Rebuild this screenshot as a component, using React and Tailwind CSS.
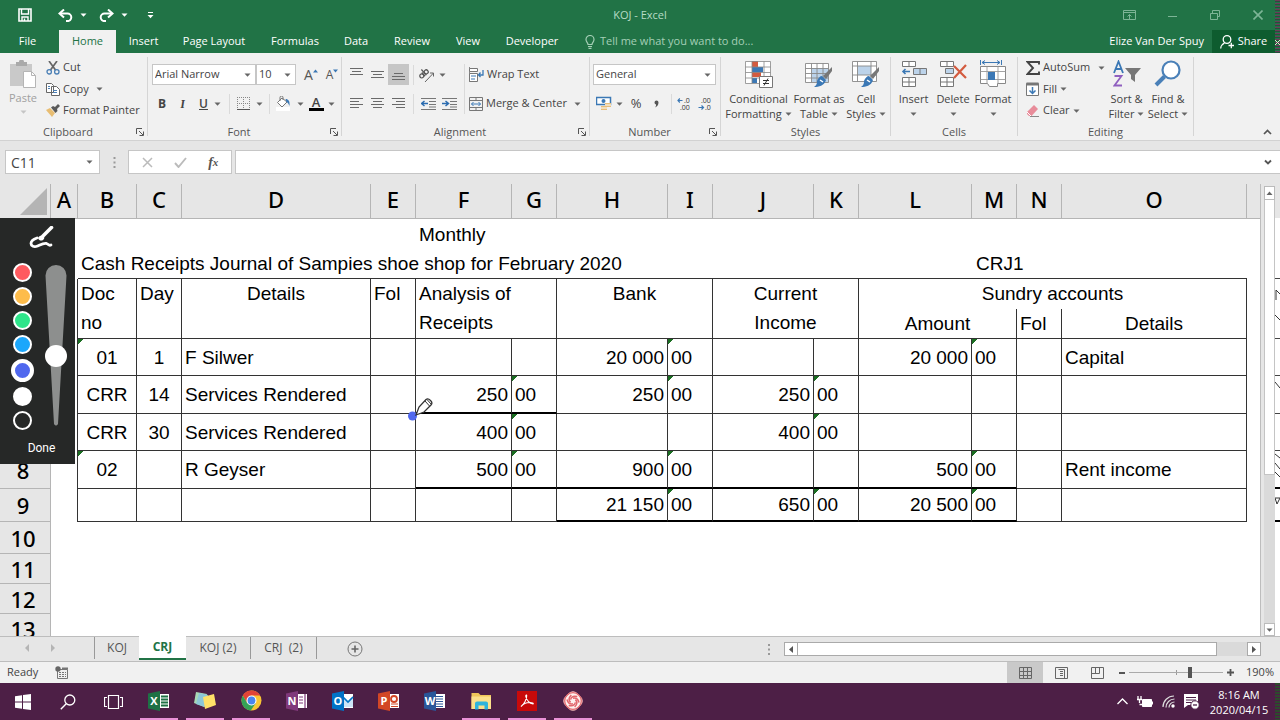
import React from "react";
import clsx from "clsx";

/* ---------- shared bits ---------- */

function Svg({ w, h, children, className }) {
  return (
    <svg width={w} height={h} viewBox={`0 0 ${w} ${h}`} fill="none" aria-hidden="true" className={clsx("shrink-0", className)}>
      {children}
    </svg>
  );
}

function Caret({ className = "text-[#666]" }) {
  return (
    <Svg w={7} h={4} className={className}>
      <path d="M0.5 0.5h6L3.5 3.8z" fill="currentColor" />
    </Svg>
  );
}

function IconButton({ label, className, children }) {
  return (
    <button type="button" aria-label={label} className={clsx("flex items-center justify-center", className)}>
      {children}
    </button>
  );
}

/* ---------- title bar ---------- */

function TitleBar() {
  return (
    <header className="grid h-[30px] shrink-0 grid-cols-3 items-center bg-[#217346] text-white">
      <div className="flex items-center pl-3">
        <IconButton label="Save" className="w-[26px]">
          <Svg w={14} h={14}>
            <path d="M1 1h12v12H1z" stroke="currentColor" strokeWidth="1.6" />
            <path d="M3.5 1v5h7V1M4 13V9h6v4M6.5 10.5V13" stroke="currentColor" strokeWidth="1.4" />
          </Svg>
        </IconButton>
        <IconButton label="Undo" className="ml-3 w-[30px]">
          <Svg w={15} h={13}>
            <path d="M2 4.5h7.5a3.8 3.8 0 0 1 0 7.6H8" stroke="currentColor" strokeWidth="2" />
            <path d="M6 0.5L1.5 4.5L6 8.5" stroke="currentColor" strokeWidth="2" />
          </Svg>
        </IconButton>
        <Caret className="text-white" />
        <IconButton label="Redo" className="ml-1 w-[30px]">
          <Svg w={15} h={13}>
            <path d="M13 4.5H5.5a3.8 3.8 0 0 0 0 7.6H7" stroke="currentColor" strokeWidth="2" />
            <path d="M9 0.5l4.5 4L9 8.5" stroke="currentColor" strokeWidth="2" />
          </Svg>
        </IconButton>
        <Caret className="text-white" />
        <IconButton label="Customize Quick Access Toolbar" className="ml-3 w-5">
          <Svg w={7} h={7}>
            <path d="M1 0.5h5" stroke="currentColor" />
            <path d="M0.5 3h6L3.5 6.3z" fill="currentColor" />
          </Svg>
        </IconButton>
      </div>
      <h1 className="text-center text-[11px] leading-4 text-[#b5dcc5]">KOJ - Excel</h1>
      <div className="flex justify-end text-[#7db596]">
        <IconButton label="Ribbon Display Options" className="w-[43px]">
          <Svg w={13} h={10}>
            <path d="M0.5 0.5h12v9h-12zM0.5 2.5h12M6.5 9V4.5M4.5 6.5l2-2l2 2" stroke="currentColor" />
          </Svg>
        </IconButton>
        <IconButton label="Minimize" className="w-[43px]">
          <Svg w={9} h={9}><path d="M0 5.5h9" stroke="currentColor" /></Svg>
        </IconButton>
        <IconButton label="Restore" className="w-[43px]">
          <Svg w={10} h={10}>
            <path d="M0.5 3.5h7v6h-7zM2.5 3.5v-3h7v6h-2" stroke="currentColor" />
          </Svg>
        </IconButton>
        <IconButton label="Close" className="w-[43px]">
          <Svg w={10} h={10}><path d="M0.5 0.5l9 9M9.5 0.5l-9 9" stroke="currentColor" strokeWidth="1.6" /></Svg>
        </IconButton>
      </div>
    </header>
  );
}

const TABS = [
  ["File", "w-[55px]"],
  ["Home", "ml-1 w-[57px] bg-[#f1f1f1] text-[#217346]"],
  ["Insert", "w-[55px]"],
  ["Page Layout", "w-[86px]"],
  ["Formulas", "w-[76px]"],
  ["Data", "w-[46px]"],
  ["Review", "w-[66px]"],
  ["View", "w-[46px]"],
  ["Developer", "w-[82px]"],
];

function RibbonTabs() {
  return (
    <nav className="flex h-[23px] shrink-0 bg-[#217346] text-[11px] text-white">
      {TABS.map(([name, cls]) => (
        <button key={name} type="button" className={clsx("whitespace-nowrap text-center", cls)}>
          {name}
        </button>
      ))}
      <button type="button" className="ml-3 flex items-center gap-[5px] text-[#a5cfb6]">
        <Svg w={10} h={14}>
          <path d="M3 9.5C3 7.5 1 7 1 4.5a4 4 0 0 1 8 0C9 7 7 7.5 7 9.5zM3 11.5h4M3.5 13.3h3" stroke="currentColor" strokeWidth="1.2" />
        </Svg>
        Tell me what you want to do...
      </button>
      <div className="ml-auto flex pr-[5px]">
        <button type="button" className="px-2">Elize Van Der Spuy</button>
        <button type="button" className="flex w-[63px] items-center justify-center gap-1 bg-[#0e5c2f] font-medium">
          <Svg w={14} h={14}>
            <circle cx="7" cy="4.5" r="3.8" stroke="currentColor" strokeWidth="1.3" />
            <path d="M0.7 13.5C1 10.5 2.5 9 4.5 8M8.5 10.5h5.5M11.3 7.8v5.5" stroke="currentColor" strokeWidth="1.3" />
          </Svg>
          Share
        </button>
      </div>
    </nav>
  );
}

/* ---------- ribbon ---------- */

function Group({ name, width, launcher, children }) {
  return (
    <section aria-label={name} className={clsx("flex shrink-0 pt-1", width)}>
      <div className="flex min-w-0 flex-1 flex-col">
        <div className="flex h-[67px]">{children}</div>
        <div className="flex h-4 items-center text-[#555]">
          <span className="flex-1 text-center text-[11px] leading-4">{name}</span>
          {launcher && (
            <IconButton label={`${name} settings`} className="mr-[3px] w-2">
              <Svg w={8} h={8}>
                <path d="M0.5 6V0.5H6M3 3l4 4M7.5 3.5v4h-4" stroke="currentColor" />
              </Svg>
            </IconButton>
          )}
        </div>
      </div>
      <div className="mb-1 w-px bg-[#d5d5d5]" />
    </section>
  );
}

const Divider = () => <div className="h-5 w-px shrink-0 bg-[#dadada]" />;

function Combo({ label, value, width }) {
  return (
    <div className={clsx("flex h-[21px] items-center border border-[#c6c6c6] bg-white pr-1", width)}>
      <select aria-label={label} className="h-full min-w-0 flex-1 appearance-none bg-transparent pl-[2px] text-[11px] text-[#444] outline-none">
        <option>{value}</option>
      </select>
      <Caret />
    </div>
  );
}

function Lines({ rows }) {
  return (
    <Svg w={14} h={14}>
      {rows.map(([x, y, len]) => (
        <path key={y} d={`M${x} ${y}.5h${len}`} stroke="#6a6a6a" />
      ))}
    </Svg>
  );
}

const TOP = [[0, 0, 13], [2, 3, 9], [0, 6, 13]];
const MIDDLE = [[0, 3, 13], [2, 6, 9], [0, 9, 13]];
const BOTTOM = [[2, 5, 9], [0, 8, 13], [0, 11, 13]];
const LEFT = [[0, 1, 13], [0, 4, 9], [0, 7, 13], [0, 10, 9]];
const CENTER = [[0, 1, 13], [2, 4, 9], [0, 7, 13], [2, 10, 9]];
const RIGHT = [[0, 1, 13], [4, 4, 9], [0, 7, 13], [4, 10, 9]];

function Indent({ flip }) {
  return (
    <Svg w={16} h={14}>
      <path d="M0 1.5h15M8 4.5h7M8 7.5h7M0 12.5h15M8 10h7" stroke="#777" />
      <path d={flip ? "M0 6.5h6M3.5 4l3 2.5l-3 2.5" : "M7 6.5H1M3.5 4L0.5 6.5l3 2.5"} stroke="#2b6cb0" strokeWidth="1.5" />
    </Svg>
  );
}

function Clipboard() {
  return (
    <Group name="Clipboard" width="w-[148px]" launcher>
      <button type="button" className="flex w-[46px] flex-col items-center pt-[3px] text-[#a0a0a0]">
        <Svg w={28} h={30}>
          <path d="M1 4h22v22H1z" fill="#c9c9c9" />
          <path d="M7 2h3a2.5 2.5 0 0 1 5 0h3v4H7z" fill="#aaa" />
          <path d="M14.5 11.5h8l4 4v12h-12z" fill="#fff" stroke="#b5b5b5" />
          <path d="M22.5 11.5v4h4" stroke="#b5b5b5" />
        </Svg>
        <span className="text-[11px] leading-4">Paste</span>
        <Caret className="mt-1 text-[#c5c5c5]" />
      </button>
      <div className="flex flex-col text-[11px] text-[#444]">
        <button type="button" className="flex h-[21px] items-center gap-[3px]">
          <Svg w={14} h={14}>
            <path d="M3 0l6.5 9M11 0L4.5 9" stroke="#666" strokeWidth="1.7" />
            <circle cx="3.2" cy="10.8" r="2.2" stroke="#4a7fb5" strokeWidth="1.3" />
            <circle cx="10.8" cy="10.8" r="2.2" stroke="#4a7fb5" strokeWidth="1.3" />
          </Svg>
          Cut
        </button>
        <button type="button" className="flex h-[22px] items-center gap-[3px]">
          <Svg w={14} h={13}>
            <path d="M0.5 0.5h5l2 2v7h-7zM5.5 3.5h5l3 3v6h-8z" fill="#fff" stroke="#666" />
            <path d="M2 3.5h2M2 5.5h2M7 7.5h4M7 9.5h4" stroke="#4a7fb5" />
          </Svg>
          Copy
          <Caret className="ml-1 text-[#666]" />
        </button>
        <button type="button" className="flex h-[21px] items-center gap-[3px] whitespace-nowrap">
          <Svg w={14} h={13}>
            <path d="M0 6l4-2l5 5l-3 4z" fill="#e8bd72" />
            <path d="M5 3.5l2-1.5l2 1l3-3l2 2l-3 3l0.5 2l-2 2z" fill="#5a5a5a" />
          </Svg>
          Format Painter
        </button>
      </div>
    </Group>
  );
}

function FontGroup() {
  return (
    <Group name="Font" width="w-[194px]" launcher>
      <div className="flex flex-1 flex-col pl-1 pt-[7px]">
        <div className="flex h-[21px] items-center">
          <Combo label="Font" value="Arial Narrow" width="w-[104px]" />
          <Combo label="Font size" value="10" width="w-10" />
          <IconButton label="Increase font size" className="ml-1 w-[22px] text-[14px] text-[#555]">
            A<Svg w={5} h={12}><path d="M0 3.5h5L2.5 0.5z" fill="#3b78b5" /></Svg>
          </IconButton>
          <IconButton label="Decrease font size" className="w-[20px] text-[12px] text-[#555]">
            A<Svg w={5} h={12}><path d="M0 0.5h5L2.5 3.5z" fill="#3b78b5" /></Svg>
          </IconButton>
        </div>
        <div className="mt-2 flex h-[21px] items-center text-[12px] text-[#444]">
          <IconButton label="Bold" className="w-5 font-bold">B</IconButton>
          <IconButton label="Italic" className="w-[21px] font-serif font-bold italic">I</IconButton>
          <IconButton label="Underline" className="w-[21px] font-semibold underline">U</IconButton>
          <Caret />
          <div className="w-2" />
          <Divider />
          <IconButton label="Borders" className="w-[26px]">
            <Svg w={13} h={13}>
              <path d="M0.5 0v12M6.5 0v12M12.5 0v12M0 0.5h13M0 6.5h13" stroke="#888" strokeDasharray="1 1" />
              <path d="M0 12.5h13" stroke="#555" />
            </Svg>
          </IconButton>
          <Caret />
          <div className="w-[6px]" />
          <Divider />
          <IconButton label="Fill color" className="w-[27px]">
            <Svg w={15} h={15}>
              <path d="M0 11h14v4H0z" fill="#fff" />
              <path d="M6 2L1.5 6.5L6 11l5-5z" fill="#fff" stroke="#777" />
              <path d="M4 5V1.5a1.5 1.5 0 0 1 3 0V4" stroke="#777" />
              <path d="M9.5 3c3 0 4.500 2 4 7c-1-2-1-3-3-4z" fill="#3b78b5" />
            </Svg>
          </IconButton>
          <Caret />
          <IconButton label="Font color" className="w-6">
            <span className="h-[15px] w-[15px] border-b-[3px] border-black text-[13px] font-semibold leading-3">A</span>
          </IconButton>
          <Caret />
        </div>
      </div>
    </Group>
  );
}

function Alignment() {
  return (
    <Group name="Alignment" width="w-[248px]" launcher>
      <div className="flex flex-col pl-1 pt-[7px]">
        <div className="flex h-[21px] items-center">
          <IconButton label="Top align" className="w-[21px]"><Lines rows={TOP} /></IconButton>
          <IconButton label="Middle align" className="w-[21px]"><Lines rows={MIDDLE} /></IconButton>
          <IconButton label="Bottom align" className="h-[21px] w-[21px] bg-[#c6c6c6]"><Lines rows={BOTTOM} /></IconButton>
          <div className="w-1" />
          <Divider />
          <IconButton label="Orientation" className="w-[25px]">
            <Svg w={18} h={18}>
              <g stroke="#555" strokeWidth="1.2" transform="rotate(-42 7 9)">
                <circle cx="4" cy="7.500" r="2" />
                <path d="M6.300 5v5M8 2.500V10" />
                <circle cx="10" cy="7.500" r="2" />
              </g>
              <path d="M7 16L15.500 7M12 7h3.500v3.500" stroke="#666" />
            </Svg>
          </IconButton>
          <Caret />
        </div>
        <div className="mt-2 flex h-[21px] items-center">
          <IconButton label="Align left" className="w-[21px]"><Lines rows={LEFT} /></IconButton>
          <IconButton label="Align center" className="w-[21px]"><Lines rows={CENTER} /></IconButton>
          <IconButton label="Align right" className="w-[21px]"><Lines rows={RIGHT} /></IconButton>
          <div className="w-1" />
          <Divider />
          <IconButton label="Decrease indent" className="ml-1 w-[21px]"><Indent /></IconButton>
          <IconButton label="Increase indent" className="w-[21px]"><Indent flip /></IconButton>
        </div>
      </div>
      <div className="ml-1 mt-[7px] h-[50px] w-px bg-[#dadada]" />
      <div className="flex flex-col pl-1 pt-[7px] text-[11px] text-[#444]">
        <button type="button" className="flex h-[21px] items-center gap-[3px]">
          <Svg w={15} h={15}>
            <path d="M0.5 0v15" stroke="#888" />
            <path d="M0.5 1.5h8v3h-8zM0.5 6.5h8v8h-8z" fill="#fff" stroke="#777" />
            <path d="M2 9h5M2 12h4" stroke="#3b78b5" />
            <path d="M14 3v5h-4M11.5 5.5L9.5 8l2 2" stroke="#3b78b5" strokeWidth="1.3" />
          </Svg>
          Wrap Text
        </button>
        <button type="button" className="mt-2 flex h-[21px] items-center gap-[3px] whitespace-nowrap">
          <Svg w={14} h={14}>
            <path d="M0.5 0.5h13v13h-13zM0.5 3.5h13M0.5 10.5h13M7 0.5v3M7 10.5v3" stroke="#777" />
            <path d="M2.5 7h9M4.5 5L2.5 7l2 2M9.5 5l2 2l-2 2" stroke="#3b78b5" />
          </Svg>
          Merge &amp; Center
          <Caret className="ml-1 text-[#666]" />
        </button>
      </div>
    </Group>
  );
}

function Decimal({ left }) {
  return (
    <Svg w={15} h={14}>
      <text x={left ? 7 : 3} y="6" fontSize="7" fill="#333">{left ? ".0" : ".00"}</text>
      <text x={left ? 3 : 7} y="13" fontSize="7" fill="#333">{left ? ".00" : ".0"}</text>
      <path d={left ? "M5.5 3.5H1M2.8 1.5L1 3.5l1.8 2" : "M0.5 10.5H5.5M3.5 8.5l2 2l-2 2"} stroke="#3b78b5" strokeWidth="1.2" />
    </Svg>
  );
}

function NumberGroup() {
  return (
    <Group name="Number" width="w-[131px]" launcher>
      <div className="flex flex-1 flex-col pl-[3px] pt-[7px]">
        <Combo label="Number format" value="General" width="w-[123px]" />
        <div className="mt-2 flex h-[21px] items-center">
          <IconButton label="Accounting format" className="ml-[3px] w-4">
            <Svg w={16} h={15}>
              <path d="M0.5 1.5h14v7h-14z" fill="#fff" stroke="#3b78b5" strokeWidth="1.5" />
              <circle cx="7.5" cy="5" r="2" fill="#3b78b5" />
              <path d="M5 10h6v4H5zM9 7h6v4H9z" fill="#e6bd7b" />
              <path d="M5 12h6M9 9h6" stroke="#fff" />
            </Svg>
          </IconButton>
          <Caret className="ml-1 text-[#666]" />
          <IconButton label="Percent style" className="ml-[2px] w-[22px] text-[13px] text-[#444]">%</IconButton>
          <IconButton label="Comma style" className="w-[18px]">
            <Svg w={5} h={8}><path d="M0.5 2.5a2 2 0 1 1 4 0C4.5 5 3 7 0.8 7.5C2 6.5 2.2 5.5 2 4.5a2 2 0 0 1-1.5-2z" fill="#555" /></Svg>
          </IconButton>
          <div className="w-[6px]" />
          <Divider />
          <IconButton label="Increase decimal" className="ml-[2px] w-[21px]"><Decimal left /></IconButton>
          <IconButton label="Decrease decimal" className="w-[21px]"><Decimal /></IconButton>
        </div>
      </div>
    </Group>
  );
}

function BigButton({ icon, first, second, width }) {
  return (
    <button type="button" className={clsx("flex flex-col items-center whitespace-nowrap pt-[3px] text-[11px] leading-[15px] text-[#444]", width)}>
      {icon}
      <span className="mt-[3px]">{first}</span>
      <span className="flex h-[15px] items-center gap-[3px]">
        {second}
        <Caret />
      </span>
    </button>
  );
}

const Brush = () => (
  <>
    <path d="M27 7l-9 9l3 3l6-8z" fill="#777" />
    <path d="M17 16l4 4c-2 6-7 7-12 7c3-2 3-4 3-6c1-3 3-5 5-5z" fill="#3b78b5" />
    <path d="M15 20l3 2" stroke="#fff" strokeWidth="1.5" />
  </>
);

function Styles() {
  return (
    <Group name="Styles" width="w-[170px]">
      <BigButton
        width="w-[75px]"
        first="Conditional"
        second="Formatting"
        icon={
          <Svg w={28} h={28}>
            <path d="M0.5 1.5h25v22h-25z" fill="#fff" />
            <path d="M7 1h6v6H7zM7 12h9v5H7z" fill="#d35b3f" />
            <path d="M7 7h11v5H7zM7 18h5v5H7z" fill="#3b78b5" />
            <path d="M0.5 1.5h25v22h-25zM7 1.5v22M19 1.5v22M0.5 7h25M0.5 12.5h25M0.5 18h25" stroke="#888" strokeWidth="0.8" />
            <path d="M14.5 16.5h13v11h-13z" fill="#fff" stroke="#777" />
            <path d="M18 20.5h6M18 23.5h6M23 18.5l-4 7" stroke="#333" />
          </Svg>
        }
      />
      <BigButton
        width="w-[46px]"
        first="Format as"
        second="Table"
        icon={
          <Svg w={28} h={28}>
            <path d="M0.5 3.5h23v19h-23z" fill="#fff" />
            <path d="M7 8h16v14H7z" fill="#bcd3ea" />
            <path d="M0.5 3.5h23v19h-23zM6.5 3.5v19M12 3.5v19M18 3.5v19M0.5 8.5h23M0.5 13.5h23M0.5 18h23" stroke="#888" strokeWidth="0.9" />
            <Brush />
          </Svg>
        }
      />
      <BigButton
        width="w-[48px]"
        first="Cell"
        second="Styles"
        icon={
          <Svg w={28} h={28}>
            <path d="M0.5 1.5h24v20h-24z" fill="#fff" />
            <path d="M6 6h13v9H6z" fill="#bcd3ea" />
            <path d="M0.5 1.5h24v20h-24zM5.5 1.5v20M19 1.5v20M0.5 6h24M0.5 15h24" stroke="#888" strokeWidth="0.9" />
            <Brush />
          </Svg>
        }
      />
    </Group>
  );
}

function Cells() {
  return (
    <Group name="Cells" width="w-[127px]">
      <BigButton
        width="ml-[2px] w-[41px]"
        first="Insert"
        icon={
          <Svg w={26} h={28}>
            <path d="M1.5 1.5h13v5h-13zM8 1.5v5M1.5 17.5h13v9h-13zM8 17.5v9M1.5 22h13" fill="#fff" stroke="#777" />
            <path d="M12.5 8.5h13v6h-13zM19 8.5v6" fill="#bcd3ea" stroke="#777" />
            <path d="M9 11.5H2M4.5 9L2 11.5L4.5 14" stroke="#3b78b5" strokeWidth="1.6" />
          </Svg>
        }
      />
      <BigButton
        width="w-[38px]"
        first="Delete"
        icon={
          <Svg w={28} h={28}>
            <path d="M1.5 1.5h13v5h-13zM8 1.5v5M1.5 17.5h13v9h-13zM8 17.5v9M1.5 22h13" fill="#fff" stroke="#777" />
            <path d="M6.5 8.5h8v5h-8z" fill="#bcd3ea" stroke="#777" />
            <path d="M15 6l12 12M27 5L15 18" stroke="#d35b3f" strokeWidth="2.2" />
          </Svg>
        }
      />
      <BigButton
        width="w-[42px]"
        first="Format"
        icon={
          <Svg w={28} h={28}>
            <path d="M1.5 0v5M22.5 0v5M3 2.5h18M6 0.5l-3 2l3 2M18 0.5l3 2l-3 2" stroke="#3b78b5" />
            <path d="M1.5 6.5h25v17h-8v3h-8l-2-3h-7z" fill="#fff" stroke="#888" />
            <path d="M8 6.5v17M19 6.5v17M1.5 11.5h25M1.5 19.5h25" stroke="#999" strokeWidth="0.9" />
            <path d="M9 12h7v8H9z" fill="#3b78b5" />
          </Svg>
        }
      />
    </Group>
  );
}

function Editing() {
  return (
    <Group name="Editing" width="w-[176px]">
      <div className="flex w-[87px] flex-col pl-2 text-[11px] text-[#444]">
        <button type="button" className="flex h-[21px] items-center gap-[3px]">
          <Svg w={14} h={14}><path d="M13 3.5V1H1.5L7 7l-5.5 6H13v-2.5" stroke="#444" strokeWidth="1.9" /></Svg>
          AutoSum
          <Caret className="ml-auto text-[#666]" />
        </button>
        <button type="button" className="flex h-[22px] items-center gap-[3px]">
          <Svg w={14} h={14}>
            <path d="M0.5 1.5h12v12h-12z" fill="#fff" stroke="#777" />
            <path d="M0.5 0.5h12v3h-12z" fill="#777" />
            <path d="M6.5 5v6.5M3.5 8.5l3 3l3-3" stroke="#3b78b5" strokeWidth="1.5" />
          </Svg>
          Fill
          <Caret />
        </button>
        <button type="button" className="flex h-[21px] items-center gap-[3px]">
          <Svg w={14} h={14}>
            <path d="M1 8l7-7l4 4l-6.5 7H3L1 10z" fill="#e88c9a" />
            <path d="M1 8l4 4" stroke="#fff" />
            <path d="M4 12.5h9" stroke="#888" />
          </Svg>
          Clear
          <Caret />
        </button>
      </div>
      <BigButton
        width="w-[43px]"
        first={<>Sort &amp;</>}
        second="Filter"
        icon={
          <Svg w={28} h={28}>
            <path d="M1 13L5.5 1.5L10 13M2.5 9h6" stroke="#3b78b5" strokeWidth="1.8" />
            <path d="M1.5 16h7L1.5 25.5h7.5" stroke="#8f5fbf" strokeWidth="1.8" />
            <path d="M12 8h16l-6 7v7l-4-3v-4z" fill="#777" />
          </Svg>
        }
      />
      <BigButton
        width="w-[40px]"
        first={<>Find &amp;</>}
        second="Select"
        icon={
          <Svg w={28} h={28}>
            <circle cx="17" cy="10" r="8.5" fill="#fff" stroke="#4a80b8" strokeWidth="2.2" />
            <path d="M10.5 16.5L2 25" stroke="#4a80b8" strokeWidth="4" />
          </Svg>
        }
      />
    </Group>
  );
}

function Ribbon() {
  return (
    <div className="flex h-[88px] shrink-0 border-b border-[#d2d2d2] bg-[#f1f1f1]">
      <Clipboard />
      <FontGroup />
      <Alignment />
      <NumberGroup />
      <Styles />
      <Cells />
      <Editing />
      <div className="flex flex-1 items-end justify-end pb-1 pr-2">
        <IconButton label="Collapse the Ribbon" className="text-[#555]">
          <Svg w={9} h={8}><path d="M1 6l3.5-3.5L8 6" stroke="currentColor" strokeWidth="1.7" /></Svg>
        </IconButton>
      </div>
    </div>
  );
}

function FormulaBar() {
  return (
    <div className="flex h-[43px] shrink-0 items-start pl-[5px] pt-[9px]">
      <div className="flex h-6 w-[95px] items-center border border-[#c6c6c6] bg-white pr-[6px]">
        <input aria-label="Name Box" defaultValue="C11" className="min-w-0 flex-1 bg-transparent pl-[5px] text-[14px] text-[#444] outline-none" />
        <Caret />
      </div>
      <Svg w={28} h={24}><path d="M14.5 7v11" stroke="#999" strokeWidth="2" strokeDasharray="2 2.5" /></Svg>
      <div className="flex h-6 w-[104px] items-center justify-around border border-[#c6c6c6] bg-white px-[2px]">
        <IconButton label="Cancel"><Svg w={11} h={11}><path d="M1 1l9 9M10 1l-9 9" stroke="#bbb" strokeWidth="1.5" /></Svg></IconButton>
        <IconButton label="Enter"><Svg w={13} h={11}><path d="M1 6l3.5 4L12 1" stroke="#bbb" strokeWidth="1.9" /></Svg></IconButton>
        <IconButton label="Insert Function" className="font-['Liberation_Serif',serif] text-[14px] font-bold italic text-[#555]">
          f<span className="text-[11px]">x</span>
        </IconButton>
      </div>
      <div className="ml-[3px] flex h-6 flex-1 items-center border border-r-0 border-[#c6c6c6] bg-white pr-2">
        <input aria-label="Formula Bar" className="min-w-0 flex-1 bg-transparent px-1 text-[14px] outline-none" />
        <Svg w={8} h={8}><path d="M1 2.5l3 3l3-3" stroke="#555" strokeWidth="1.9" /></Svg>
      </div>
    </div>
  );
}

/* ---------- worksheet ---------- */

const COLUMNS = [
  ["A", "w-[27px]"], ["B", "w-[59px]"], ["C", "w-[45px]"], ["D", "w-[189px]"],
  ["E", "w-[45px]"], ["F", "w-[96px]"], ["G", "w-[45px]"], ["H", "w-[111px]"],
  ["I", "w-[45px]"], ["J", "w-[101px]"], ["K", "w-[45px]"], ["L", "w-[113px]"],
  ["M", "w-[45px]"], ["N", "w-[45px]"], ["O", "w-[185px]"],
];

const ENTRIES = [
  { n: 5, h: "h-[37px]", v: { B: "01", C: "1", D: "F Silwer", H: "20 000", I: "00", L: "20 000", M: "00", O: "Capital" }, flags: "BIM", thick: "" },
  { n: 6, h: "h-[38px]", v: { B: "CRR", C: "14", D: "Services Rendered", F: "250", G: "00", H: "250", I: "00", J: "250", K: "00" }, flags: "GIK", thick: "FG" },
  { n: 7, h: "h-[37px]", v: { B: "CRR", C: "30", D: "Services Rendered", F: "400", G: "00", J: "400", K: "00" }, flags: "GK", thick: "" },
  { n: 8, h: "h-[38px]", v: { B: "02", D: "R Geyser", F: "500", G: "00", H: "900", I: "00", L: "500", M: "00", O: "Rent income" }, flags: "BGIM", thick: "FGHIJKLM" },
  { n: 9, h: "h-[33px]", v: { H: "21 150", I: "00", J: "650", K: "00", L: "20 500", M: "00" }, flags: "IKM", thick: "HIJKLM" },
];

function RowHead({ n }) {
  return (
    <th scope="row" className="border-b border-r border-[#b5b5b5] bg-[#e6e6e6] p-0 pr-1 text-center font-['Comic_Sans_MS','Noto_Sans',sans-serif] text-[22px] font-medium leading-[28px]">
      {n}
    </th>
  );
}

const edge = "border-r border-b border-[#333]";
const head = "p-0 px-[3px] align-top font-normal";

function Worksheet() {
  return (
    <table className="w-full table-fixed border-separate border-spacing-0 whitespace-nowrap bg-white font-['Liberation_Sans',Arial,sans-serif] text-[19px] leading-[29px] text-black">
      <colgroup>
        <col className="w-[51px]" />
        {COLUMNS.map(([c, w]) => <col key={c} className={w} />)}
        <col />
      </colgroup>
      <thead>
        <tr className="h-[35px] bg-[#e6e6e6] font-['Comic_Sans_MS','Noto_Sans',sans-serif]">
          <td className="border-b border-r border-[#b5b5b5] p-0 pr-[3px]">
            <Svg w={27} h={27} className="ml-auto"><path d="M27 0v27H0z" fill="#b4b4b4" /></Svg>
          </td>
          {COLUMNS.map(([c]) => (
            <th key={c} scope="col" className="border-b border-r border-[#b5b5b5] p-0 pb-[3px] text-center text-[22px] font-medium">{c}</th>
          ))}
          <td className="border-b border-[#b5b5b5] p-0" />
        </tr>
      </thead>
      <tbody>
        <tr className="h-[30px]">
          <RowHead n={1} />
          <td colSpan={5} className="p-0" />
          <td colSpan={11} className="p-0 pl-[3px]">Monthly</td>
        </tr>
        <tr className="h-[30px]">
          <RowHead n={2} />
          <td className="p-0" />
          <td colSpan={11} className="border-b border-[#333] p-0 pl-[3px]">
            Cash Receipts Journal of Sampies shoe shop for February 2020
          </td>
          <td colSpan={3} className="border-b border-[#333] p-0 pl-1">CRJ1</td>
          <td className="p-0" />
        </tr>
        <tr className="h-[30px]">
          <RowHead n={3} />
          <td rowSpan={2} className="border-r border-[#333] p-0" />
          <th rowSpan={2} className={clsx(edge, head, "text-left")}>Doc<br />no</th>
          <th rowSpan={2} className={clsx(edge, head, "text-left")}>Day</th>
          <th rowSpan={2} className={clsx(edge, head, "text-center")}>Details</th>
          <th rowSpan={2} className={clsx(edge, head, "text-left")}>Fol</th>
          <th rowSpan={2} colSpan={2} className={clsx(edge, head, "text-left")}>Analysis of<br />Receipts</th>
          <th rowSpan={2} colSpan={2} className={clsx(edge, head, "text-center")}>Bank</th>
          <th rowSpan={2} colSpan={2} className={clsx(edge, head, "text-center")}>Current<br />Income</th>
          <th colSpan={4} className={clsx(head, "border-r border-[#333] text-center")}>Sundry accounts</th>
          <td className="p-0" />
        </tr>
        <tr className="h-[30px]">
          <RowHead n={4} />
          <th colSpan={2} className={clsx(edge, head, "text-center")}>Amount</th>
          <th className={clsx(edge, head, "text-left")}>Fol</th>
          <th className={clsx(edge, head, "text-center")}>Details</th>
          <td className="p-0" />
        </tr>
        {ENTRIES.map((row) => (
          <tr key={row.n} className={row.h}>
            <RowHead n={row.n} />
            {COLUMNS.map(([c]) => (
              <td
                key={c}
                className={clsx(
                  "border-r border-[#333] p-0 px-[3px]",
                  c !== "A" && !row.thick.includes(c) && "border-b",
                  row.thick.includes(c) && "border-b-2 border-b-black",
                  "BC".includes(c) && "text-center",
                  "FHJL".includes(c) && "text-right",
                  row.flags.includes(c) && "bg-[linear-gradient(135deg,#1b6e22_4px,transparent_4px)]"
                )}
              >
                {row.v[c]}
              </td>
            ))}
            <td className="p-0" />
          </tr>
        ))}
        {[10, 11, 12, 13].map((n) => (
          <tr key={n} className={n === 10 ? "h-8" : "h-[30px]"}>
            <RowHead n={n} />
            <td colSpan={16} className="p-0" />
          </tr>
        ))}
      </tbody>
    </table>
  );
}

function VerticalScroll() {
  return (
    <div className="ml-[3px] mt-[2px] flex w-[11px] flex-col bg-[#dadada]">
      <IconButton label="Scroll up" className="h-[14px] border border-[#bbb] bg-white">
        <Svg w={7} h={4}><path d="M0.5 4h6L3.5 0.5z" fill="#666" /></Svg>
      </IconButton>
      <div className="h-[275px] border border-t-0 border-[#c4c4c4] bg-white" />
      <IconButton label="Scroll down" className="mt-auto h-[13px] border border-[#bbb] bg-white"><Caret /></IconButton>
    </div>
  );
}

const INKS = [
  ["Red", "bg-[#ff5a5f]"], ["Yellow", "bg-[#fdbc4b]"], ["Green", "bg-[#2ee58a]"],
  ["Light blue", "bg-[#1ca7fb]"], ["Blue", "bg-[#5068ee]"], ["White", "bg-white"], ["Black", "bg-[#262827]"],
];

function DrawingPanel() {
  return (
    <aside aria-label="Drawing tools" className="absolute left-0 top-[34px] flex h-[246px] w-[75px] flex-col bg-[#262827] text-white">
      <div className="flex h-10 justify-end pr-5 pt-2">
        <Svg w={26} h={24}>
          <path d="M22.5 1.5L14 10" stroke="currentColor" strokeWidth="3.6" strokeLinecap="round" />
          <path d="M9 12c1-2 3-3 5-2s1.5 3 0 4s-4 1-5-2z" fill="currentColor" />
          <path d="M8 12C5 13 2 15 2 17.5s3 4 6.500 2.500s6-3 9-2.500c2 0.500 2 2.500 4.500 1.500" stroke="currentColor" strokeWidth="2.800" strokeLinecap="round" />
        </Svg>
      </div>
      <div className="flex flex-1 pt-[2px]">
        <fieldset className="ml-[11px] flex h-[170px] w-5 flex-col items-center justify-between pt-[3px]">
          {INKS.map(([name, color]) => (
            <input
              key={name}
              type="radio"
              name="ink"
              aria-label={name}
              defaultChecked={name === "Blue"}
              className={clsx("size-[19px] shrink-0 appearance-none rounded-full border-2 border-white checked:size-[23px] checked:border-4", color)}
            />
          ))}
        </fieldset>
        <div className="relative ml-[10px] h-[168px] w-6">
          <Svg w={24} h={168}>
            <path d="M1.5 15.5a10.5 10.5 0 0 1 21 0L14 164q-2 3-4 0z" fill="#8d8f8e" />
          </Svg>
          <input
            type="range"
            aria-label="Brush size"
            defaultValue="42"
            className="absolute inset-0 h-full w-full appearance-none bg-transparent [direction:rtl] [writing-mode:vertical-lr] [&::-webkit-slider-thumb]:size-[22px] [&::-webkit-slider-thumb]:appearance-none [&::-webkit-slider-thumb]:rounded-full [&::-webkit-slider-thumb]:bg-white"
          />
        </div>
      </div>
      <button type="button" className="h-8 pl-2 text-center font-['Roboto',sans-serif] text-[12px]">Done</button>
    </aside>
  );
}

function Sheet() {
  return (
    <main className="relative flex min-h-0 flex-1 pr-[5px]">
      <div className="min-w-0 flex-1 overflow-hidden border-r border-[#bdbdbd] bg-white">
        <Worksheet />
      </div>
      <VerticalScroll />
      <DrawingPanel />
      <svg aria-hidden="true" width="26" height="26" viewBox="0 0 26 26" fill="none" className="absolute left-[407px] top-[212px]">
        <circle cx="5.5" cy="20" r="4.5" fill="#5068ee" />
        <path d="M9 19L12 11L19 3.5Q21 2 23.5 4.5Q26 7 24 9L17 16Z" fill="#fff" stroke="#333" strokeWidth="1.3" />
        <path d="M18 5l4.5 5M20 3.5l4 4.5" stroke="#333" />
      </svg>
    </main>
  );
}

/* ---------- bottom bars ---------- */

function SheetTabs() {
  return (
    <div className="flex h-[26px] shrink-0 items-start border-b border-t border-[#bdbdbd] pr-[19px] text-[12px] text-[#555]">
      <div className="flex h-[22px] w-[94px] items-center pl-6 text-[#b5b5b5]">
        <IconButton label="Previous sheet"><Svg w={5} h={8}><path d="M5 0v8L1 4z" fill="currentColor" /></Svg></IconButton>
        <IconButton label="Next sheet" className="ml-[22px]"><Svg w={5} h={8}><path d="M0 0v8l4-4z" fill="currentColor" /></Svg></IconButton>
      </div>
      <button type="button" className="h-[22px] w-[45px] border-l border-[#999]">KOJ</button>
      <button type="button" className="-mt-px h-6 w-[47px] border-b-2 border-[#217346] bg-white font-bold text-[#217346]">CRJ</button>
      <button type="button" className="h-[22px] w-[65px] border-r border-[#999]">KOJ (2)</button>
      <button type="button" className="h-[22px] w-[66px] whitespace-pre border-r border-[#999]">CRJ  (2)</button>
      <IconButton label="New sheet" className="ml-[30px] h-[23px]">
        <Svg w={16} h={16}>
          <circle cx="8" cy="8" r="7" stroke="#777" />
          <path d="M8 4.5v7M4.5 8h7" stroke="#666" strokeWidth="1.6" />
        </Svg>
      </IconButton>
      <div className="ml-auto flex items-center pt-[5px]">
        <Svg w={16} h={14}><path d="M1 2v11" stroke="#999" strokeWidth="2" strokeDasharray="2 2.5" /></Svg>
        <div className="flex h-[14px] w-[477px] bg-[#dadada]">
          <IconButton label="Scroll left" className="w-[14px] border border-[#aaa] bg-white"><Svg w={4} h={7}><path d="M4 0v7L0 3.5z" fill="#555" /></Svg></IconButton>
          <div className="w-[419px] border border-l-0 border-[#aaa] bg-white" />
          <IconButton label="Scroll right" className="ml-auto w-[14px] border border-[#aaa] bg-white"><Svg w={4} h={7}><path d="M0 0v7l4-3.5z" fill="#555" /></Svg></IconButton>
        </div>
      </div>
    </div>
  );
}

function StatusBar() {
  return (
    <div className="flex h-[21px] shrink-0 items-center bg-[#f1f1f1] pl-[7px] pr-[6px] text-[11px] text-[#444]">
      <span className="w-12">Ready</span>
      <IconButton label="Record Macro">
        <Svg w={13} h={13}>
          <path d="M2.5 3.5h10v9h-10z" stroke="#777" />
          <path d="M7 1.5h6v2H7z" fill="#777" />
          <circle cx="3" cy="3" r="2.7" fill="#666" />
          <path d="M4 6.5h7M4 8.5h7M4 10.5h7" stroke="#777" strokeDasharray="2 1" />
        </Svg>
      </IconButton>
      <div className="ml-auto flex h-full items-center">
        <IconButton label="Normal view" className="h-full w-9 bg-[#c9c9c9]">
          <Svg w={13} h={12}><path d="M0.5 0.5h12v11h-12zM4.5 0.5v11M8.5 0.5v11M0.5 4.5h12M0.5 8.5h12" stroke="#666" /></Svg>
        </IconButton>
        <IconButton label="Page Layout view" className="h-full w-9">
          <Svg w={13} h={12}><path d="M0.5 0.5h12v11h-12zM3.5 2.5h6v9h-6M5 4.5h3M5 6.5h3M5 8.5h3" stroke="#666" /></Svg>
        </IconButton>
        <IconButton label="Page Break Preview" className="h-full w-9">
          <Svg w={13} h={12}><path d="M0.5 0.5h12v11h-12zM4.5 0.5v6M8.5 0.5v6M0.5 6.5h8" stroke="#666" /></Svg>
        </IconButton>
        <IconButton label="Zoom out" className="ml-1 w-[6px]"><Svg w={6} h={6}><path d="M0 3h6" stroke="#555" strokeWidth="2" /></Svg></IconButton>
        <div className="mx-1 flex items-center bg-[linear-gradient(#999,#999)] bg-[length:1px_5px] bg-center bg-no-repeat">
          <input
            type="range"
            aria-label="Zoom"
            defaultValue="66"
            className="h-[11px] w-[94px] appearance-none bg-[linear-gradient(#aaa,#aaa)] bg-[length:100%_1px] bg-center bg-no-repeat [&::-webkit-slider-thumb]:h-[11px] [&::-webkit-slider-thumb]:w-1 [&::-webkit-slider-thumb]:appearance-none [&::-webkit-slider-thumb]:bg-[#555]"
          />
        </div>
        <IconButton label="Zoom in" className="w-[7px]"><Svg w={7} h={7}><path d="M0 3.5h7M3.5 0v7" stroke="#555" strokeWidth="1.8" /></Svg></IconButton>
        <span className="w-10 text-right">190%</span>
      </div>
    </div>
  );
}

function OfficeIcon({ letter, color, children }) {
  return (
    <Svg w={22} h={20}>
      <path d="M10 3h11v14H10z" fill="#fff" />
      {children}
      <path d="M0 2.5L12 0v20L0 17.5z" fill={color} />
      <text x="6" y="14" textAnchor="middle" fontSize="11" fontWeight="700" fill="#fff">{letter}</text>
    </Svg>
  );
}

const APPS = [
  ["Excel", true, (
    <OfficeIcon letter="X" color="#1e7145"><path d="M13 5.5h7M13 8.5h7M13 11.5h7M13 14.5h7" stroke="#1e7145" strokeWidth="2" /></OfficeIcon>
  )],
  ["Sticky Notes", true, (
    <Svg w={24} h={19}>
      <path d="M3 1l11 2l-3 13L1 12z" fill="#a9d8b5" />
      <path d="M6 2l9 2l-3 12l-9-3z" fill="#8cc7d8" />
      <path d="M10 6l11-3l2 11l-11 4z" fill="#ffe168" />
    </Svg>
  )],
  ["Chrome", true, (
    <Svg w={21} h={21}>
      <circle cx="10.5" cy="10.5" r="10" fill="#f9c633" />
      <path d="M1.8 5.5A10 10 0 0 1 19.2 5.5H10.5L6.2 13z" fill="#e24436" />
      <path d="M1.8 5.5a10 10 0 0 0 8 15L14.8 13L6.2 13z" fill="#35a256" />
      <circle cx="10.5" cy="10.5" r="5" fill="#fff" />
      <circle cx="10.5" cy="10.5" r="3.9" fill="#4a85ee" />
    </Svg>
  )],
  ["OneNote", false, (
    <OfficeIcon letter="N" color="#80397b"><path d="M13 6h4M13 9h4M13 12h4M19 3v14" stroke="#80397b" strokeWidth="1.2" /></OfficeIcon>
  )],
  ["Outlook", false, (
    <OfficeIcon letter="O" color="#0072c6"><path d="M11 5l5 5l5-5v11H11z" fill="#cde5f7" /><path d="M11 6l5 5l5-5" stroke="#0072c6" strokeWidth="1.6" /></OfficeIcon>
  )],
  ["PowerPoint", false, (
    <OfficeIcon letter="P" color="#d24726"><circle cx="16" cy="8" r="3" stroke="#d24726" strokeWidth="1.8" /><path d="M13 13h7M13 15.5h7" stroke="#d24726" /></OfficeIcon>
  )],
  ["Word", false, (
    <OfficeIcon letter="W" color="#2a5699"><path d="M12 5.5h7M12 8h7M12 10.5h7M12 13h7M12 15.5h7" stroke="#2a5699" /></OfficeIcon>
  )],
  ["File Explorer", true, (
    <Svg w={21} h={18}>
      <path d="M0.5 1h7l2 2H20v14H0.5z" fill="#f0c65a" />
      <path d="M0.5 4.5H20V17H0.5z" fill="#fce08b" />
      <path d="M4 17.5v-6q0-2 2-2h9q2 0 2 2v6h-3.5v-4h-6v4z" fill="#2fb4dc" />
    </Svg>
  )],
  ["Adobe Reader", true, (
    <Svg w={20} h={20}>
      <path d="M0 0h20v20H0z" fill="#c80a0a" />
      <path d="M4 15.5C7 13.5 10 8 9.7 4.5C9.5 3.5 8.5 4 8.8 5.5C9.5 9 12.5 12.5 16 13C17 12.5 15 11.3 12.5 11.5C9.5 11.5 6 13 4 15.5z" stroke="#fff" strokeWidth="1.1" />
    </Svg>
  )],
  ["Loom", true, (
    <Svg w={22} h={22}>
      <rect x="3" y="3" width="16" height="16" rx="5" fill="#fdf1ef" stroke="#f0b4b4" transform="rotate(45 11 11)" />
      {[0, 60, 120, 180, 240, 300].map((deg) => (
        <path key={deg} d="M11 8.200C13.500 7.500 16 9 17 12.500" stroke="#e2676d" strokeWidth="1.500" transform={`rotate(${deg} 11 11)`} />
      ))}
      <circle cx="11" cy="11" r="8.300" stroke="#e2676d" strokeWidth="1.200" />
    </Svg>
  )],
];

function Taskbar() {
  return (
    <footer className="flex h-[37px] shrink-0 items-stretch bg-[#4d1f46] pr-[5px] text-white">
      <IconButton label="Start" className="w-[45px]">
        <Svg w={16} h={16}><path d="M0 2.3L7 1.3v6.2H0zM8 1.1L16 0v7.5H8zM0 8.5h7v6.2L0 13.7zM8 8.5h8V16L8 14.9z" fill="#fff" /></Svg>
      </IconButton>
      <IconButton label="Search" className="w-[45px]">
        <Svg w={16} h={16}><circle cx="9.8" cy="6" r="5" stroke="#fff" strokeWidth="1.3" /><path d="M6.2 9.7L0.8 15.2" stroke="#fff" strokeWidth="1.4" /></Svg>
      </IconButton>
      <IconButton label="Task View" className="w-[46px]">
        <Svg w={19} h={14}><path d="M4.5 0.5h10v13h-10zM3 2.5H0.5v9H3M16 2.5h2.5v9H16" stroke="#fff" strokeWidth="1.2" /></Svg>
      </IconButton>
      {APPS.map(([name, open, icon]) => (
        <button key={name} type="button" aria-label={name} className="flex w-[46px] flex-col items-center">
          <span className="flex flex-1 items-center">{icon}</span>
          <span className={clsx("h-[2px] w-[38px]", open && "bg-[#e991d6]")} />
        </button>
      ))}
      <div className="ml-auto flex items-center">
        <IconButton label="Show hidden icons" className="w-[22px]"><Svg w={11} h={7}><path d="M0.5 6l5-5l5 5" stroke="#fff" strokeWidth="1.3" /></Svg></IconButton>
        <IconButton label="Battery" className="w-6">
          <Svg w={16} h={12}>
            <path d="M5.5 3.5h9v7h-9z" fill="#fff" stroke="#fff" />
            <path d="M15.5 5.5v3M1 0v3M4 0v3M0 3.5h5M2.5 4v3M2.5 8.5h3" stroke="#fff" strokeWidth="1.3" />
          </Svg>
        </IconButton>
        <IconButton label="Network" className="w-[22px]">
          <Svg w={13} h={13}><path d="M1 12A11 11 0 0 1 12 1M4 12.5A8.5 8.5 0 0 1 12.5 4M7 12.5A5.5 5.5 0 0 1 12.5 7" stroke="#ddd" strokeWidth="1.2" /><circle cx="11" cy="11" r="1.7" fill="#fff" /></Svg>
        </IconButton>
        <IconButton label="Notifications" className="w-6">
          <Svg w={17} h={16}>
            <path d="M1 0h14v11H5l-4 3z" fill="#fff" />
            <path d="M3 3.5h10M3 6h10M3 8.5h5" stroke="#4d1f46" />
            <circle cx="12" cy="11" r="4.2" fill="#fff" stroke="#4d1f46" /><path d="M10 11h4" stroke="#4d1f46" strokeWidth="1.3" />
          </Svg>
        </IconButton>
        <time dateTime="2020-04-15T08:16" className="w-[72px] text-center text-[11px] leading-[15px]">
          8:16 AM<br />2020/04/15
        </time>
      </div>
    </footer>
  );
}

/* Thin sliver of the neighbouring screen along the right edge. */
function EdgeStrip() {
  return (
    <svg aria-hidden="true" width="5" height="720" viewBox="0 0 5 720" fill="none" className="pointer-events-none absolute right-0 top-0">
      <path d="M2.5 0v53" stroke="#6b3b5a" strokeWidth="5" strokeDasharray="1 2" />
      <path d="M2.5 1v52" stroke="#274f3c" strokeWidth="5" strokeDasharray="1 2" />
      <path d="M0 40l5 5M0 45l5-5" stroke="#dde8c8" />
      <path d="M0 218h5v418H0z" fill="#fff" />
      <path d="M0 278.5h5M0 338.5h5M0 375.5h5M0 413.5h5M0 450.5h5" stroke="#444" />
      <path d="M0 488h5M0 521h5" stroke="#000" strokeWidth="2" />
      <path d="M1 300V290l4 4M0 315l5 5M0 382l5 6M0 454l5 4M0 463l5 6M0 472l5 5M0 498h5l-3 6z" stroke="#333" />
      <path d="M2.5 683v37" stroke="#2e4a2e" strokeWidth="5" strokeDasharray="2 1" />
    </svg>
  );
}

export default function App() {
  return (
    <div className="relative flex h-screen min-h-[480px] flex-col overflow-hidden bg-[#e6e6e6] font-['Segoe_UI','Open_Sans',sans-serif]">
      <TitleBar />
      <RibbonTabs />
      <Ribbon />
      <FormulaBar />
      <Sheet />
      <SheetTabs />
      <StatusBar />
      <Taskbar />
      <EdgeStrip />
    </div>
  );
}
